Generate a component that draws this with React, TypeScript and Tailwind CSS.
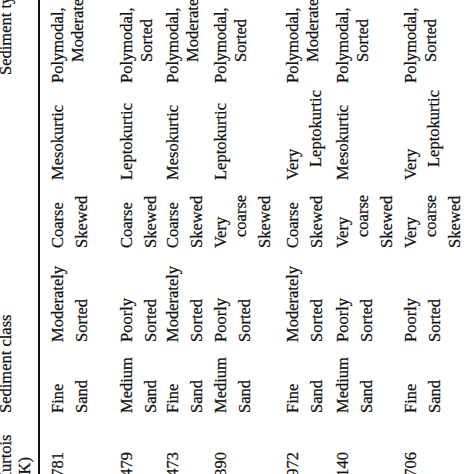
import React from 'react';

type Row = {
  h: string;
  k: string;
  size: string;
  sort: string;
  skew: 'coarse' | 'very';
  kurt: 'Mesokurtic' | 'Leptokurtic' | 'very';
  type: 'Moderately' | 'Sorted';
};

const rows: Row[] = [
  { h: 'h-[69px]', k: '0.781', size: 'Fine', sort: 'Moderately', skew: 'coarse', kurt: 'Mesokurtic', type: 'Moderately' },
  { h: 'h-[46px]', k: '0.479', size: 'Medium', sort: 'Poorly', skew: 'coarse', kurt: 'Leptokurtic', type: 'Sorted' },
  { h: 'h-[48px]', k: '0.473', size: 'Fine', sort: 'Moderately', skew: 'coarse', kurt: 'Mesokurtic', type: 'Moderately' },
  { h: 'h-[72px]', k: '0.390', size: 'Medium', sort: 'Poorly', skew: 'very', kurt: 'Leptokurtic', type: 'Sorted' },
  { h: 'h-[50px]', k: '0.972', size: 'Fine', sort: 'Moderately', skew: 'coarse', kurt: 'very', type: 'Moderately' },
  { h: 'h-[68px]', k: '0.140', size: 'Medium', sort: 'Poorly', skew: 'very', kurt: 'Mesokurtic', type: 'Sorted' },
  { h: 'h-[72px]', k: '0.706', size: 'Fine', sort: 'Poorly', skew: 'very', kurt: 'very', type: 'Sorted' },
];

const grid = 'grid grid-cols-[101px_71px_94px_68px_97px_130px]';

function DataRow({ r }: { r: Row }) {
  return (
    <div className={`${grid} ${r.h} leading-[24px]`}>
      <div className="text-right pr-[39px]">{r.k}</div>
      <div>
        <div>{r.size}</div>
        <div>Sand</div>
      </div>
      <div>
        <div>{r.sort}</div>
        <div>Sorted</div>
      </div>
      {r.skew === 'coarse' ? (
        <div>
          <div>Coarse</div>
          <div>Skewed</div>
        </div>
      ) : (
        <div>
          <div>Very</div>
          <div className="-mt-[4px] pl-[11px]">coarse</div>
          <div>Skewed</div>
        </div>
      )}
      {r.kurt === 'very' ? (
        <div>
          <div>Very</div>
          <div className="-mt-[1px] pl-[13px]">Leptokurtic</div>
        </div>
      ) : (
        <div>{r.kurt}</div>
      )}
      <div className="whitespace-nowrap">
        <div>Polymodal,</div>
        <div className="-mt-[4px] pl-[21px]">{r.type}</div>
      </div>
    </div>
  );
}

export default function App() {
  return (
    <div className="relative w-[474px] h-[474px] overflow-hidden bg-white">
      {/* table is printed sideways in the scan */}
      <div
        className="w-[474px] h-[474px] -rotate-90 overflow-hidden text-[16.5px] text-[#111] [-webkit-text-stroke:0.25px_#111]"
        style={{ fontFamily: '"Liberation Serif", "Times New Roman", serif' }}
      >
        <div className="-ml-[40px] w-[561px]">
          {/* Header */}
          <div className="h-[42px]">
            <div className={`${grid} -mt-[4px] leading-[19px] whitespace-nowrap`}>
              <div className="pl-[30px]">
                <div>Kurtois</div>
                <div className="pl-[4px]">(K)</div>
              </div>
              <div className="col-span-4">Sediment class</div>
              <div className="pl-[8px]">Sediment type</div>
            </div>
          </div>
          <div className="h-[2px] bg-[#111]" />

          {/* Body */}
          <div className="pt-[6px] flex flex-col">
            {rows.map((r) => (
              <DataRow key={r.k} r={r} />
            ))}
          </div>
        </div>
      </div>
    </div>
  );
}
